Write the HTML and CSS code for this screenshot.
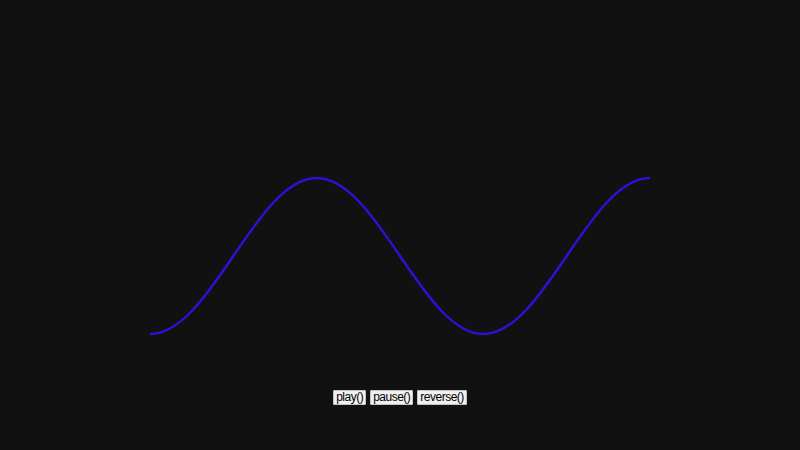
FILE: index.html
```html
<!DOCTYPE html>
<html>
<head>
<meta charset="utf-8">
<link rel="stylesheet" href="styles.css">
</head>
<body>
<div class="stage">
  <svg class="wave" width="800" height="380" viewBox="0 0 800 380">
    <path d="M150 334 C180.16 334 206.15 295.96 233.33 256 C260.51 216.04 286.5 178 316.67 178 C346.84 178 372.82 216.04 400 256 C427.18 295.96 453.17 334 483.33 334 C513.5 334 539.49 295.96 566.67 256 C593.85 216.04 619.83 178 650 178" fill="none" stroke="#2a12d6" stroke-width="2.5"/>
  </svg>
  <div class="controls">
    <button class="btn">play()</button>
    <button class="btn">pause()</button>
    <button class="btn">reverse()</button>
  </div>
</div>
</body>
</html>
```
FILE: styles.css
```css
html, body {
  margin: 0;
  padding: 0;
  background: #111111;
  width: 800px;
  height: 450px;
  overflow: hidden;
}
.stage {
  display: flex;
  flex-direction: column;
  align-items: center;
}
.wave {
  display: block;
}
.controls {
  display: flex;
  gap: 4px;
  padding-top: 10px;
}
.btn {
  font-family: "Liberation Sans", Arial, sans-serif;
  font-size: 12px;
  letter-spacing: -0.5px;
  line-height: 13px;
  height: 15px;
  padding: 0 2px;
  margin: 0;
  color: #000;
  background: #f0f0f0;
  border: 1px solid #c4c4c4;
  border-radius: 1px;
}
```
